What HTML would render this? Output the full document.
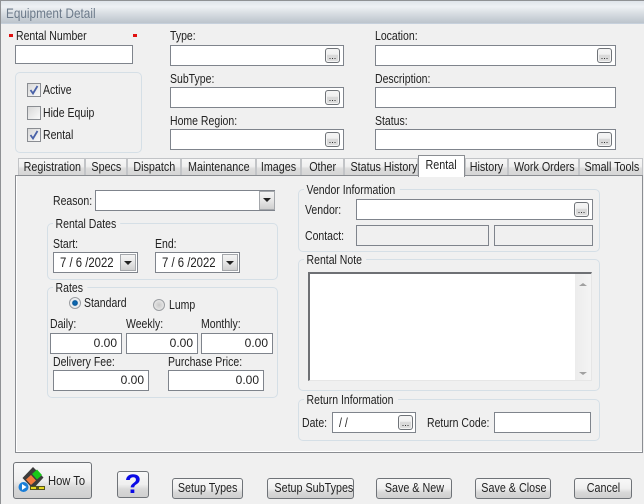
<!DOCTYPE html>
<html><head><meta charset="utf-8"><style>
html,body{margin:0;padding:0}
body{width:644px;height:504px;overflow:hidden;background:#f0f0f0;position:relative;font-family:"Liberation Sans",sans-serif;font-size:12.5px;color:#222}
div{position:absolute;box-sizing:border-box}
.t{white-space:nowrap;line-height:14px;height:14px;transform:scaleX(.84);transform-origin:0 50%}
.s{display:inline-block;transform:scaleX(.86);transform-origin:50% 50%}
.i{background:#fff;border:1px solid #7f848c}
.d{background:#f0f0f0;border:1px solid #7f848c}
.g{border:1px solid #d5dfe6;border-radius:5px}
.gt{background:#f0f0f0;padding:0 5px 0 3px}
.e{width:15px;height:15px;border:1px solid #6f7378;border-radius:3px;background:linear-gradient(#f6f6f6 0,#f0f0f0 40%,#d8d8d8 50%,#dedede 100%);box-shadow:inset 0 0 0 1px #f4f4f4;font-size:9px;line-height:15px;text-align:center;color:#111}
.tab{top:158px;height:17px;border:1px solid #c2c4c7;border-bottom:0;background:linear-gradient(#f6f6f6,#f0f0f0 45%,#dcdcdc 60%,#d6d6d6);text-align:center;line-height:17px;white-space:nowrap;color:#222;overflow:visible}
.b{border:1px solid #6f7378;border-radius:3px;background:linear-gradient(#f8f8f8,#efefef 50%,#d8d8d8 70%,#cfcfcf);text-align:center;line-height:18px;white-space:nowrap;height:21px;top:478px;color:#222}
.c{width:14px;height:14px;border:1px solid #8a8d92;background:linear-gradient(135deg,#d8d8d8,#fafafa)}
.dd{width:16px;border:1px solid #a4a7ab;background:linear-gradient(#f4f4f4,#e6e6e6 50%,#cfcfcf)}
.dd:after{content:"";position:absolute;left:3px;top:6px;border:4px solid transparent;border-top:4px solid #222;border-bottom:0}
.r{text-align:right;line-height:19px;padding-right:4px;font-size:12px}
</style></head><body>
<div style="left:0;top:0;width:644px;height:24px;background:linear-gradient(#dfe4ea,#eef1f4 25%,#d9dee3 55%,#bcc4cc);border-top:1px solid #8f9194;border-bottom:1px solid #c6d0dc"></div>
<div style="left:0;top:0;width:1px;height:504px;background:#8f9194"></div>
<div class="t" style="left:6px;top:6px;color:#6c7a8a;font-size:14px">Equipment Detail</div>

<div style="left:9px;top:34px;width:4px;height:3px;background:#e01010"></div>
<div style="left:133px;top:34px;width:4px;height:3px;background:#e01010"></div>
<div class="t" style="left:16px;top:29px">Rental Number</div>
<div class="i" style="left:15px;top:45px;width:118px;height:19px"></div>

<div class="g" style="left:15px;top:72px;width:127px;height:81px"></div>
<div class="c" style="left:27px;top:83px"><svg width="12" height="12" style="display:block"><path d="M2.5 6 L5 9.5 L9.5 2" fill="none" stroke="#4a62a8" stroke-width="1.8"/></svg></div>
<div class="t" style="left:43px;top:83px">Active</div>
<div class="c" style="left:27px;top:106px"></div>
<div class="t" style="left:43px;top:106px">Hide Equip</div>
<div class="c" style="left:27px;top:128px"><svg width="12" height="12" style="display:block"><path d="M2.5 6 L5 9.5 L9.5 2" fill="none" stroke="#4a62a8" stroke-width="1.8"/></svg></div>
<div class="t" style="left:43px;top:128px">Rental</div>

<div class="t" style="left:170px;top:29px">Type:</div>
<div class="i" style="left:170px;top:45px;width:174px;height:21px"></div><div class="e" style="left:325px;top:48px">...</div>
<div class="t" style="left:170px;top:72px">SubType:</div>
<div class="i" style="left:170px;top:87px;width:174px;height:21px"></div><div class="e" style="left:325px;top:90px">...</div>
<div class="t" style="left:170px;top:114px">Home Region:</div>
<div class="i" style="left:170px;top:129px;width:174px;height:21px"></div><div class="e" style="left:325px;top:132px">...</div>

<div class="t" style="left:375px;top:29px">Location:</div>
<div class="i" style="left:375px;top:45px;width:241px;height:21px"></div><div class="e" style="left:597px;top:48px">...</div>
<div class="t" style="left:375px;top:72px">Description:</div>
<div class="i" style="left:375px;top:87px;width:241px;height:21px"></div>
<div class="t" style="left:375px;top:114px">Status:</div>
<div class="i" style="left:375px;top:129px;width:241px;height:21px"></div><div class="e" style="left:597px;top:132px">...</div>

<div style="left:15px;top:175px;width:628px;height:278px;background:#f0f0f0;border:1px solid #8a8d92;box-shadow:inset 1px 0 0 #fff,inset 0 -1px 0 #fff"></div>
<div class="tab" style="left:18px;width:67px"><span class="s">Registration</span></div>
<div class="tab" style="left:85px;width:42px"><span class="s">Specs</span></div>
<div class="tab" style="left:127px;width:54px"><span class="s">Dispatch</span></div>
<div class="tab" style="left:181px;width:75px"><span class="s">Maintenance</span></div>
<div class="tab" style="left:256px;width:45px"><span class="s">Images</span></div>
<div class="tab" style="left:301px;width:43px"><span class="s">Other</span></div>
<div class="tab" style="left:344px;width:74px"><span class="s">Status History</span></div>
<div class="tab" style="left:465px;width:43px"><span class="s">History</span></div>
<div class="tab" style="left:508px;width:71px"><span class="s">Work Orders</span></div>
<div class="tab" style="left:579px;width:64px"><span class="s">Small Tools</span></div>
<div class="tab" style="left:418px;top:155px;width:47px;height:22px;background:#fff;border-color:#8a8d92;line-height:18px"><span class="s">Rental</span></div>

<div class="t" style="left:53px;top:194px">Reason:</div>
<div class="i" style="left:95px;top:190px;width:180px;height:21px"></div><div class="dd" style="left:259px;top:191px;height:19px"></div>

<div class="g" style="left:47px;top:223px;width:231px;height:57px"></div>
<div class="t gt" style="left:53px;top:217px">Rental Dates</div>
<div class="t" style="left:53px;top:237px">Start:</div>
<div class="i" style="left:53px;top:252px;width:85px;height:21px"></div><div class="t" style="left:60px;top:256px;font-size:13.5px">7 / 6 /2022</div><div class="dd" style="left:120px;top:254px;height:17px"></div>
<div class="t" style="left:155px;top:237px">End:</div>
<div class="i" style="left:155px;top:252px;width:85px;height:21px"></div><div class="t" style="left:162px;top:256px;font-size:13.5px">7 / 6 /2022</div><div class="dd" style="left:222px;top:254px;height:17px"></div>

<div class="g" style="left:47px;top:287px;width:231px;height:111px"></div>
<div class="t gt" style="left:53px;top:281px">Rates</div>
<div style="left:69px;top:297px;width:12px;height:12px;border-radius:50%;border:1px solid #9a9da1;background:radial-gradient(circle,#0a6cb8 0,#0a5a9c 35%,#e4e8ec 45%,#fff 100%)"></div>
<div class="t" style="left:84px;top:296px">Standard</div>
<div style="left:153px;top:299px;width:12px;height:12px;border-radius:50%;border:1px solid #9a9da1;background:radial-gradient(circle,#c8c8c8 0,#ddd 50%,#f8f8f8 100%)"></div>
<div class="t" style="left:169px;top:298px">Lump</div>
<div class="t" style="left:50px;top:317px">Daily:</div>
<div class="t" style="left:126px;top:317px">Weekly:</div>
<div class="t" style="left:201px;top:317px">Monthly:</div>
<div class="i r" style="left:50px;top:333px;width:72px;height:21px">0.00</div>
<div class="i r" style="left:126px;top:333px;width:72px;height:21px">0.00</div>
<div class="i r" style="left:201px;top:333px;width:72px;height:21px">0.00</div>
<div class="t" style="left:53px;top:355px">Delivery Fee:</div>
<div class="t" style="left:168px;top:355px">Purchase Price:</div>
<div class="i r" style="left:53px;top:370px;width:96px;height:21px">0.00</div>
<div class="i r" style="left:168px;top:370px;width:96px;height:21px">0.00</div>

<div class="g" style="left:298px;top:189px;width:302px;height:63px"></div>
<div class="t gt" style="left:304px;top:183px">Vendor Information</div>
<div class="t" style="left:305px;top:203px">Vendor:</div>
<div class="i" style="left:356px;top:199px;width:237px;height:21px"></div><div class="e" style="left:574px;top:202px">...</div>
<div class="t" style="left:305px;top:229px">Contact:</div>
<div class="d" style="left:356px;top:225px;width:133px;height:21px"></div>
<div class="d" style="left:494px;top:225px;width:99px;height:21px"></div>

<div class="g" style="left:298px;top:259px;width:302px;height:132px"></div>
<div class="t gt" style="left:304px;top:253px">Rental Note</div>
<div style="left:308px;top:272px;width:284px;height:109px;background:#fff;border-top:2px solid #6e7074;border-left:2px solid #6e7074;border-right:1px solid #e6e6e6;border-bottom:1px solid #e6e6e6"></div>
<div style="left:575px;top:274px;width:16px;height:106px;background:linear-gradient(90deg,#ececec,#f4f4f4)"></div>
<div style="left:579px;top:283px;border:4px solid transparent;border-top:0;border-bottom:3px solid #a0a0a0"></div>
<div style="left:579px;top:372px;border:4px solid transparent;border-bottom:0;border-top:3px solid #a0a0a0"></div>

<div class="g" style="left:298px;top:399px;width:302px;height:42px"></div>
<div class="t gt" style="left:304px;top:393px">Return Information</div>
<div class="t" style="left:302px;top:416px">Date:</div>
<div class="i" style="left:332px;top:412px;width:84px;height:21px"></div><div class="t" style="left:339px;top:416px">/ /</div><div class="e" style="left:398px;top:415px">...</div>
<div class="t" style="left:427px;top:416px">Return Code:</div>
<div class="i" style="left:494px;top:412px;width:97px;height:21px"></div>

<div class="b" style="left:13px;top:462px;width:79px;height:37px;line-height:35px;padding-left:29px;font-size:13px"><span class="s">How To</span></div>
<svg style="position:absolute;left:18px;top:466px" width="30" height="30" viewBox="0 0 30 30"><path d="M15 1 L25.5 11.5 L15 23 L4.5 12 Z" fill="#3c3c3c"/><path d="M19 3.5 L24 9 L19 13.5 L14 8 Z" fill="#18c818"/><path d="M13 9 L18 14.5 L13 19 L8 13.5 Z" fill="#f47a3c"/><rect x="12" y="20" width="15" height="4" fill="#55551e"/><rect x="13" y="21" width="5" height="2" fill="#e6d820"/><rect x="21" y="21" width="5" height="2" fill="#e6d820"/><circle cx="5.5" cy="21" r="5" fill="#1a7ed8"/><path d="M4 18 L8.5 21 L4 24 Z" fill="#fff"/></svg>
<div class="b" style="left:117px;top:471px;width:32px;height:27px"></div>
<div class="t" style="left:117px;top:471px;width:32px;height:26px;line-height:26px;text-align:center;font-size:27px;font-weight:bold;color:#0a0ae6;transform:none">?</div>
<div class="b" style="left:172px;width:71px"><span class="s">Setup Types</span></div>
<div class="b" style="left:267px;width:87px"><span class="s">Setup SubTypes</span></div>
<div class="b" style="left:376px;width:76px"><span class="s">Save &amp; New</span></div>
<div class="b" style="left:475px;width:76px"><span class="s">Save &amp; Close</span></div>
<div class="b" style="left:574px;width:58px"><span class="s">Cancel</span></div>
</body></html>
